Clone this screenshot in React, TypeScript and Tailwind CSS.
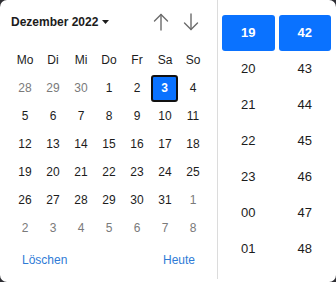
import React from "react";

const weekdays = ["Mo", "Di", "Mi", "Do", "Fr", "Sa", "So"];
const days: { d: number; muted: boolean; sel?: boolean }[] = [
  { d: 28, muted: true }, { d: 29, muted: true }, { d: 30, muted: true },
  ...Array.from({ length: 31 }, (_, i) => ({ d: i + 1, muted: false, sel: i + 1 === 3 })),
  ...Array.from({ length: 8 }, (_, i) => ({ d: i + 1, muted: true })),
];
const hours = ["19", "20", "21", "22", "23", "00", "01"];
const mins = ["42", "43", "44", "45", "46", "47", "48"];

function Arrow({ down }: { down?: boolean }) {
  return (
    <svg width="16" height="18" viewBox="0 0 16 18" fill="none" stroke="#6b6b6b" strokeWidth="1.4" strokeLinecap="round" strokeLinejoin="round" className={down ? "rotate-180" : ""}>
      <path d="M8 17V1.5" />
      <path d="M1.5 8L8 1.5L14.5 8" />
    </svg>
  );
}

export default function App() {
  return (
    <div className="w-[336px] h-[282px] bg-[#2e2e33] font-['Liberation_Sans',Arial,sans-serif] text-[#1c1c1c]">
      <div className="w-full h-full bg-white rounded-[7px] flex overflow-hidden">
        <div className="w-[217px] px-[11px] flex flex-col">
          <div className="h-[44px] flex items-center justify-between">
            <div className="flex items-center text-[12px] font-bold">
              Dezember 2022
              <svg width="7" height="4" viewBox="0 0 7 4" className="ml-[4px]"><path d="M0 0H7L3.5 4Z" fill="#1c1c1c" /></svg>
            </div>
            <div className="flex items-center gap-[14px] mr-[7px]">
              <Arrow />
              <Arrow down />
            </div>
          </div>
          <div className="mt-[2px] grid grid-cols-[repeat(7,28px)] auto-rows-[28px] text-[12px]">
            {weekdays.map((w) => (
              <div key={w} className="flex items-center justify-center">{w}</div>
            ))}
            {days.map((x, i) => (
              <div key={i} className="flex items-center justify-center">
                {x.sel ? (
                  <div className="w-[27px] h-[27px] -ml-px bg-[#0a72ff] border-2 border-[#111] rounded-[3px] flex items-center justify-center text-white font-bold">{x.d}</div>
                ) : (
                  <span className={x.muted ? "text-[#7a7a7a]" : ""}>{x.d}</span>
                )}
              </div>
            ))}
          </div>
          <div className="h-[36px] px-[11px] flex items-center justify-between text-[12px] text-[#2f7bd6]">
            <span>Löschen</span>
            <span>Heute</span>
          </div>
        </div>
        <div className="w-px h-[279px] bg-[#dcdcdc]" />
        <div className="flex-1 pl-[4px] pr-[5px] pt-[15px] flex gap-[4px] text-[13px]">
          {[hours, mins].map((col, ci) => (
            <div key={ci} className="flex-1 flex flex-col">
              {col.map((v, i) => (
                <div key={v} className={i === 0 ? "h-[36px] rounded-[3px] bg-[#0a72ff] text-white font-bold flex items-center justify-center" : "h-[36px] flex items-center justify-center"}>
                  {v}
                </div>
              ))}
            </div>
          ))}
        </div>
      </div>
    </div>
  );
}
